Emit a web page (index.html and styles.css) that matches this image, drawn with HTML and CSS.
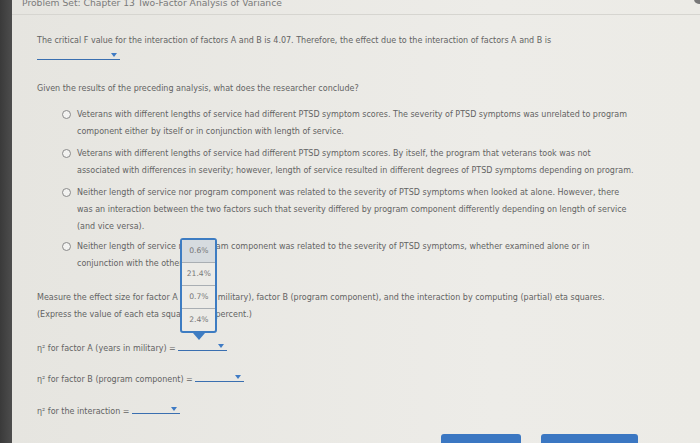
FILE: index.html
```html
<!DOCTYPE html>
<html>
<head>
<meta charset="utf-8">
<link rel="stylesheet" href="styles.css">
</head>
<body>
<div class="frame">
  <div class="strip"></div>
  <div class="page">
    <div class="header"><span class="title">Problem Set: Chapter 13 Two-Factor Analysis of Variance</span><span class="dot"></span></div>
    <div class="content">
      <p class="p1">The critical F value for the interaction of factors A and B is 4.07. Therefore, the effect due to the interaction of factors A and B is</p>
      <div class="line dd-line"><span class="dd dd1"><span class="tri"></span></span></div>
      <p class="q">Given the results of the preceding analysis, what does the researcher conclude?</p>
      <div class="opt o1"><span class="radio"></span><span class="otext">Veterans with different lengths of service had different PTSD symptom scores. The severity of PTSD symptoms was unrelated to program<br>component either by itself or in conjunction with length of service.</span></div>
      <div class="opt o2"><span class="radio"></span><span class="otext">Veterans with different lengths of service had different PTSD symptom scores. By itself, the program that veterans took was not<br>associated with differences in severity; however, length of service resulted in different degrees of PTSD symptoms depending on program.</span></div>
      <div class="opt o3"><span class="radio"></span><span class="otext">Neither length of service nor program component was related to the severity of PTSD symptoms when looked at alone. However, there<br>was an interaction between the two factors such that severity differed by program component differently depending on length of service<br>(and vice versa).</span></div>
      <div class="opt o4"><span class="radio"></span><span class="otext">Neither length of service nor program component was related to the severity of PTSD symptoms, whether examined alone or in<br>conjunction with the other.</span></div>
      <p class="measure">Measure the effect size for factor A (years in military), factor B (program component), and the interaction by computing (partial) eta squares.<br>(Express the value of each eta squared as a percent.)</p>
      <div class="line eta ea">η² for factor A (years in military) = <span class="dd dda"><span class="tri"></span>
        <span class="popup">
          <span class="item sel">0.6%</span>
          <span class="item">21.4%</span>
          <span class="item">0.7%</span>
          <span class="item">2.4%</span>
          <span class="pointer"></span>
        </span>
      </span></div>
      <div class="line eta eb">η² for factor B (program component) = <span class="dd ddb"><span class="tri"></span></span></div>
      <div class="line eta ei">η² for the interaction = <span class="dd ddi"><span class="tri"></span></span></div>
    </div>
    <div class="buttons">
      <span class="btn b1"></span>
      <span class="btn b2"></span>
    </div>
  </div>
</div>
</body>
</html>
```
FILE: styles.css
```css
html, body {
  margin: 0;
  padding: 0;
  width: 700px;
  height: 443px;
  overflow: hidden;
  background: #e8e7e2;
}
body {
  font-family: "DejaVu Sans", Verdana, sans-serif;
  color: #636363;
  font-size: 8px;
}
.frame {
  display: flex;
  height: 443px;
}
.strip {
  width: 12px;
  background: linear-gradient(to right, #3a3a3a, #4d4d4d);
  flex: none;
}
.page {
  flex: 1;
  display: flex;
  flex-direction: column;
  background: linear-gradient(to right, #e6e5e0, #edece8 70%, #ecebe6);
}
.header {
  height: 14px;
  border-bottom: 1px solid #d6d5d0;
  overflow: hidden;
  padding-left: 10px;
  display: flex;
  justify-content: space-between;
  flex: none;
}
.title {
  display: block;
  font-size: 9.2px;
  line-height: 10px;
  margin-top: -2px;
  color: #7a7a7a;
}
.dot {
  width: 10px;
  height: 10px;
  border-radius: 50%;
  background: #777;
  margin-top: -6px;
  margin-right: -4px;
}
.content {
  padding-left: 25px;
  flex: 1;
  line-height: 17px;
}
p { margin: 0; }
.p1 { margin-top: 18px; line-height: 16px; }
.line { height: 17px; }
.dd {
  display: inline-block;
  position: relative;
  vertical-align: baseline;
  height: 10px;
  border-bottom: 1px solid #3a6fb0;
}
.dd1 { width: 83px; }
.dda { width: 49px; }
.ddb { width: 49px; }
.ddi { width: 48px; }
.tri {
  position: absolute;
  right: 3px;
  top: 4px;
  width: 0;
  height: 0;
  border-left: 3.5px solid transparent;
  border-right: 3.5px solid transparent;
  border-top: 4px solid #3f7bc4;
}
.q { margin-top: 14px; }
.opt {
  display: flex;
  padding-left: 25px;
  margin-top: 5px;
}
.o1 { margin-top: 9px; }
.o4 { margin-top: 3px; }
.radio {
  flex: none;
  width: 7px;
  height: 7px;
  border: 1px solid #8a8a8a;
  border-radius: 50%;
  margin-top: 4px;
  margin-right: 6px;
  background: #f2f2f0;
}
.measure { margin-top: 17px; }
.ea { margin-top: 17px; }
.eb { margin-top: 14px; }
.ei { margin-top: 15px; }
.popup {
  position: absolute;
  left: 2px;
  bottom: 17px;
  width: 33px;
  border: 2px solid #3d7cc2;
  border-radius: 3px;
  background: #ecebe7;
  display: flex;
  flex-direction: column;
  line-height: 22px;
  font-size: 7.6px;
}
.item {
  text-align: center;
  border-top: 1px solid #a9aeb3;
  color: #777;
  height: 22px;
}
.item:first-child { border-top: none; }
.sel { background: #d6dbdf; }
.pointer {
  position: absolute;
  left: 11px;
  bottom: -9px;
  width: 0;
  height: 0;
  border-left: 6px solid transparent;
  border-right: 6px solid transparent;
  border-top: 7px solid #3d7cc2;
}
.buttons {
  height: 9px;
  display: flex;
  gap: 20px;
  padding-left: 429px;
  flex: none;
}
.btn {
  display: block;
  height: 12px;
  background: #3b77c2;
  border-radius: 3px 3px 0 0;
}
.b1 { width: 80px; }
.b2 { width: 97px; }
```
